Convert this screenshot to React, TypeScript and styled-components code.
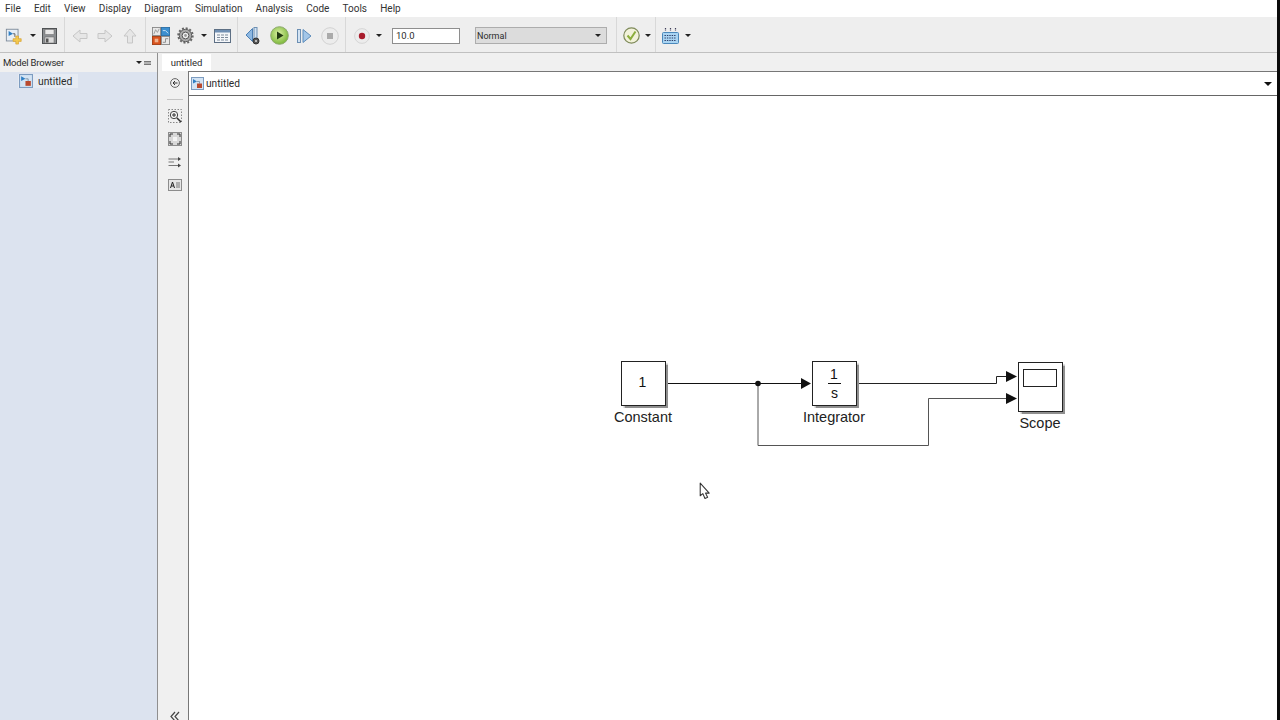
import React from 'react'
import styled, { createGlobalStyle } from 'styled-components'

const GlobalStyle = createGlobalStyle`
  html, body {
    margin: 0;
    padding: 0;
    background: #fff;
  }
  * {
    box-sizing: border-box;
  }
`

const Page = styled.div`
  width: 1280px;
  height: 720px;
  display: flex;
  flex-direction: column;
  overflow: hidden;
  background: #f0f0f0;
  border-right: 3px solid #0b0b0b;
  color: #2b2b2b;
  font-family: Roboto, 'Noto Sans', sans-serif;
`

const MenuBar = styled.div`
  height: 17px;
  flex: none;
  display: flex;
  align-items: center;
  padding-left: 5px;
  gap: 13.2px;
  background: #fff;
  font-size: 10px;
  color: #333;
`

const Toolbar = styled.div`
  height: 36px;
  flex: none;
  display: flex;
  align-items: center;
  background: #eeeeee;
  border-bottom: 1px solid #c0c0c0;
`

const ToolGroup = styled.div<{ $width: number; $pad?: number; $gap?: number }>`
  width: ${({ $width }) => $width}px;
  height: 100%;
  flex: none;
  display: flex;
  align-items: center;
  gap: ${({ $gap }) => $gap ?? 4}px;
  padding-left: ${({ $pad }) => $pad ?? 4}px;
  padding-top: 2px;
  border-right: 1px solid #d8d8d8;

  &:last-child {
    border-right: none;
  }
`

const Caret = styled.span`
  width: 0;
  height: 0;
  flex: none;
  border-left: 3px solid transparent;
  border-right: 3px solid transparent;
  border-top: 3px solid #222;
`

const AddressCaret = styled(Caret)`
  border-left-width: 4px;
  border-right-width: 4px;
  border-top-width: 4px;
  border-top-color: #111;
`

const TimeInput = styled.div`
  width: 68px;
  height: 16px;
  flex: none;
  margin-left: 4px;
  padding-left: 3px;
  background: #fff;
  border: 1px solid #8e8e8e;
  font-size: 9.5px;
  line-height: 14px;
`

const ModeSelect = styled.div`
  width: 132px;
  height: 17px;
  flex: none;
  margin-left: 9px;
  padding: 0 5px 0 1px;
  display: flex;
  align-items: center;
  justify-content: space-between;
  background: #dcdcdc;
  border: 1px solid #adadad;
  font-size: 9px;
`

const Main = styled.div`
  flex: 1;
  min-height: 0;
  display: flex;
`

const Sidebar = styled.div`
  width: 158px;
  flex: none;
  display: flex;
  flex-direction: column;
  border-right: 1px solid #8f8f8f;
`

const SidebarHead = styled.div`
  height: 19px;
  flex: none;
  display: flex;
  align-items: center;
  justify-content: space-between;
  padding: 0 6px 0 3px;
  font-size: 9.5px;
  letter-spacing: -0.2px;
`

const HeadTools = styled.div`
  display: flex;
  align-items: center;
  gap: 2px;
`

const TreeArea = styled.div`
  flex: 1;
  padding: 2px 0 0 18px;
  background: #dce3ef;
`

const TreeRow = styled.div`
  width: 60px;
  height: 14px;
  display: flex;
  align-items: center;
  gap: 5px;
  padding-left: 1px;
  background: #e6ebf3;
  font-size: 10.3px;
`

const Work = styled.div`
  flex: 1;
  min-width: 0;
  display: flex;
  flex-direction: column;
`

const TabRow = styled.div`
  height: 18px;
  flex: none;
  display: flex;
  padding: 1px 0 0 4px;
`

const Tab = styled.div`
  width: 49px;
  height: 17px;
  display: flex;
  align-items: center;
  justify-content: center;
  background: #fff;
  font-size: 9.5px;
`

const Body = styled.div`
  flex: 1;
  min-height: 0;
  display: flex;
`

const Strip = styled.div`
  width: 31px;
  flex: none;
  display: flex;
  flex-direction: column;
  align-items: center;
  padding: 7px 0 0 3px;
  border-right: 1px solid #777;
`

const StripRule = styled.div`
  width: 16px;
  height: 1px;
  margin: 11px 0 9px;
  background: #c4c4c4;
`

const StripButton = styled.div`
  width: 14px;
  height: 14px;
  margin-bottom: 9px;
  display: flex;
`

const StripEnd = styled.div`
  margin-top: auto;
  margin-bottom: -2px;
  height: 11px;
  display: flex;
`

const Editor = styled.div`
  flex: 1;
  min-width: 0;
  display: flex;
  flex-direction: column;
  background: #fff;
`

const AddressBar = styled.div`
  height: 25px;
  flex: none;
  display: flex;
  align-items: center;
  justify-content: space-between;
  padding: 0 5px 0 2px;
  border-top: 1px solid #777;
  border-bottom: 1px solid #666;
`

const Crumb = styled.div`
  display: flex;
  align-items: center;
  gap: 2px;
  font-size: 10.2px;
`

const Canvas = styled.div`
  flex: 1;
  position: relative;
`

const Wires = styled.svg`
  position: absolute;
  left: 0;
  top: 0;
  width: 1088px;
  height: 624px;
`

const Block = styled.div<{ $x: number; $y: number; $h: number }>`
  position: absolute;
  left: ${({ $x }) => $x}px;
  top: ${({ $y }) => $y}px;
  width: 45px;
  height: ${({ $h }) => $h}px;
  display: flex;
  flex-direction: column;
  align-items: center;
  justify-content: center;
  background: #fff;
  border: 1px solid #222;
  box-shadow: 1.5px 1.5px 1px #8f8f8f;
  font-family: 'Liberation Sans', Arial, sans-serif;
  font-size: 14px;
  color: #111;
`

const ConstantValue = styled.span`
  margin: 0 2px 4px 0;
`

const Fraction = styled.span`
  width: 13px;
  padding-right: 1px;
  line-height: 18px;
  text-align: center;
`

const FractionBottom = styled(Fraction)`
  padding-right: 0;
  border-top: 1px solid #111;
`

const ScopeScreen = styled.div`
  width: 34px;
  height: 18px;
  margin: 0 1px 18px 0;
  border: 1px solid #222;
`

const BlockLabel = styled.div<{ $cx: number; $y: number }>`
  position: absolute;
  left: ${({ $cx }) => $cx - 50}px;
  top: ${({ $y }) => $y}px;
  width: 100px;
  text-align: center;
  font-family: 'Liberation Sans', Arial, sans-serif;
  font-size: 14.5px;
  line-height: 17px;
  color: #222;
`

const Pointer = styled.svg`
  position: absolute;
  left: 510px;
  top: 386px;
  width: 13px;
  height: 18px;
`

function ModelIcon({ size = 13 }: { size?: number }) {
  return (
    <svg width={size} height={size} viewBox="0 0 13 13">
      <rect x="0.5" y="0.5" width="12" height="12" fill="#d4e4f4" stroke="#7d9cc0" />
      <path d="M2 2 L6 4.5 L2 6.5 Z" fill="#2f7fc4" />
      <path d="M6 4.5 H8.5 V6.5" fill="none" stroke="#6b7f92" strokeWidth="0.7" />
      <rect x="6" y="6.5" width="5" height="4.5" fill="#b94a2e" />
    </svg>
  )
}

function NewModelIcon() {
  return (
    <svg width="18" height="18" viewBox="0 0 20 20">
      <rect x="1.5" y="2.5" width="13" height="13" fill="#e8eef5" stroke="#7c8a99" />
      <path d="M4 4.5 L9 7.5 L4 10 Z" fill="#2f7fc4" />
      <path d="M9 7.5 H11 V11" fill="none" stroke="#555" />
      <path d="M12 10 H15 V13 H18 V16 H15 V19 H12 V16 H9 V13 H12 Z" fill="#f3c94e" stroke="#d69e2c" strokeWidth="0.7" />
    </svg>
  )
}

function SaveIcon() {
  return (
    <svg width="15" height="16" viewBox="0 0 15 16">
      <rect x="0.5" y="0.5" width="14" height="15" fill="#8c8f92" stroke="#4f5254" />
      <rect x="3" y="1.5" width="9" height="5" fill="#e8e8e8" stroke="#666" strokeWidth="0.5" />
      <rect x="3" y="9" width="9" height="6" fill="#dcdcdc" stroke="#666" strokeWidth="0.5" />
      <rect x="4" y="10.5" width="2.5" height="4" fill="#555" />
    </svg>
  )
}

function NavArrow({ rotate }: { rotate: number }) {
  return (
    <svg width="16" height="16" viewBox="0 0 16 16">
      <path
        d="M1 8 L8 2 V5.5 H15 V10.5 H8 V14 Z"
        fill="#e6e6e6"
        stroke="#c6c6c6"
        transform={`rotate(${rotate} 8 8)`}
      />
    </svg>
  )
}

function LibraryIcon() {
  return (
    <svg width="18" height="18" viewBox="0 0 20 20">
      <rect x="0.5" y="0.5" width="9" height="9" fill="#e8e8e8" stroke="#888" />
      <path d="M2 8 L4 3 L6 6 L8 2" fill="none" stroke="#999" />
      <rect x="10.5" y="0.5" width="9" height="9" fill="#3c8fd0" stroke="#2a6ea6" />
      <path d="M12 4 H15 L18 7" fill="none" stroke="#cfe5f5" />
      <rect x="0.5" y="10.5" width="9" height="9" fill="#d9531e" stroke="#a33d13" />
      <rect x="3" y="13" width="4" height="4" fill="#f0b28e" />
      <rect x="10.5" y="10.5" width="9" height="9" fill="#e8e8e8" stroke="#888" />
      <path d="M12 17 H15 V13 H18" fill="none" stroke="#888" />
    </svg>
  )
}

function GearIcon() {
  return (
    <svg width="17" height="17" viewBox="0 0 17 17">
      <circle cx="8.5" cy="8.5" r="6.2" fill="#a9a9a9" stroke="#5d5d5d" />
      <circle cx="8.5" cy="8.5" r="7.2" fill="none" stroke="#666" strokeWidth="2" strokeDasharray="2 1.77" />
      <circle cx="8.5" cy="8.5" r="3.4" fill="#eee" stroke="#555" />
      <circle cx="8.5" cy="8.5" r="1.4" fill="#999" />
    </svg>
  )
}

function ExplorerIcon() {
  return (
    <svg width="17" height="14" viewBox="0 0 17 14">
      <rect x="0.5" y="0.5" width="16" height="13" fill="#f5f7fa" stroke="#5d6f84" />
      <rect x="1" y="1" width="15" height="2.5" fill="#6f8fb3" />
      <path d="M3 6 H14 M3 8.5 H14 M3 11 H14" stroke="#7d8b9b" strokeDasharray="3 1" />
    </svg>
  )
}

function StepBackIcon() {
  return (
    <svg width="16" height="19" viewBox="0 0 16 19">
      <path d="M7.5 2.5 L1 9 L7.5 15.5 Z" fill="#8db8e2" stroke="#4d80b5" />
      <rect x="9" y="1.5" width="3" height="11" fill="#d3e3f3" stroke="#6c8fb3" />
      <circle cx="11" cy="15" r="3" fill="#555" stroke="#333" />
      <circle cx="11" cy="15" r="1" fill="#ddd" />
    </svg>
  )
}

function RunIcon() {
  return (
    <svg width="19" height="19" viewBox="0 0 19 19">
      <defs>
        <radialGradient id="run" cx="45%" cy="40%" r="60%">
          <stop offset="0%" stopColor="#dcf0a4" />
          <stop offset="100%" stopColor="#7cb83a" />
        </radialGradient>
      </defs>
      <circle cx="9.5" cy="9.5" r="8.8" fill="url(#run)" stroke="#8ca96c" />
      <path d="M7 5.5 L13.5 9.5 L7 13.5 Z" fill="#233a12" />
    </svg>
  )
}

function StepForwardIcon() {
  return (
    <svg width="15" height="16" viewBox="0 0 15 16">
      <rect x="0.5" y="1.5" width="3" height="13" fill="#d3e3f3" stroke="#6c8fb3" />
      <path d="M6 1.5 L14 8 L6 14.5 Z" fill="#a3c6e8" stroke="#5d8cbb" />
    </svg>
  )
}

function RoundButton({ fill, size, dot }: { fill: string; size: number; dot: 'stop' | 'rec' }) {
  return (
    <svg width={size} height={size} viewBox="0 0 18 18">
      <circle cx="9" cy="9" r="8.3" fill="#ececec" stroke="#d2d2d2" />
      {dot === 'stop' ? <rect x="6" y="6" width="6" height="6" fill={fill} /> : <circle cx="9" cy="9" r="3.6" fill={fill} />}
    </svg>
  )
}

function CheckIcon() {
  return (
    <svg width="17" height="17" viewBox="0 0 17 17">
      <circle cx="8.5" cy="8.5" r="7.7" fill="#f2f2da" stroke="#7e8a5a" strokeWidth="1.2" />
      <path d="M4.5 8.5 L7.5 12 L12.5 4.5" fill="none" stroke="#8cae3c" strokeWidth="2" />
    </svg>
  )
}

function GridIcon() {
  return (
    <svg width="17" height="17" viewBox="0 0 17 17">
      <path d="M3.5 1 V4 M8.5 1 V4 M13.5 1 V4" stroke="#3f3f5a" strokeWidth="1.2" strokeDasharray="1 0.6" />
      <rect x="0.5" y="5.5" width="16" height="11" rx="1" fill="#a9d4f2" stroke="#4a88bb" />
      <path d="M2.5 8.5 H14.5 M2.5 11 H14.5 M2.5 13.5 H14.5" stroke="#2e3d66" strokeWidth="1.2" strokeDasharray="1.4 1" />
    </svg>
  )
}

function BackDot() {
  return (
    <svg width="10" height="10" viewBox="0 0 10 10">
      <circle cx="5" cy="5" r="4.4" fill="#eee" stroke="#666" />
      <path d="M7.5 5 H3 M5 3 L3 5 L5 7" fill="none" stroke="#333" />
    </svg>
  )
}

function ZoomIcon() {
  return (
    <svg width="14" height="14" viewBox="0 0 14 14">
      <rect x="0.5" y="0.5" width="13" height="13" fill="none" stroke="#888" strokeDasharray="1.5 1.5" />
      <circle cx="6" cy="6" r="3.7" fill="#f4f4f4" stroke="#444" />
      <path d="M4 6 H8 M6 4 V8" stroke="#333" />
      <path d="M9 9 L13 13" stroke="#333" strokeWidth="1.6" />
    </svg>
  )
}

function FitIcon() {
  return (
    <svg width="14" height="14" viewBox="0 0 14 14">
      <rect x="0.5" y="0.5" width="13" height="13" fill="#d8d8d8" stroke="#8c8c8c" />
      <path d="M2 5 V2 H5 M9 2 H12 V5 M12 9 V12 H9 M5 12 H2 V9" fill="none" stroke="#333" />
      <rect x="5" y="5" width="4" height="4" fill="#f4f4f4" />
    </svg>
  )
}

function RouteIcon() {
  return (
    <svg width="14" height="14" viewBox="0 0 14 14">
      <path d="M0.5 4 H11 M0.5 7 H6 M0.5 10.5 H11" stroke="#777" />
      <path d="M10 2 L13 4 L10 6 Z M10 8.5 L13 10.5 L10 12.5 Z" fill="#444" />
    </svg>
  )
}

function AnnotationIcon() {
  return (
    <svg width="14" height="14" viewBox="0 0 14 14">
      <rect x="0.5" y="1.5" width="13" height="11" fill="#e6e6e6" stroke="#8c8c8c" />
      <path d="M2.5 10 L4.5 4 L6.5 10 M3.3 8 H5.7" fill="none" stroke="#222" />
      <path d="M8 5 H12 M8 7 H12 M8 9 H12" stroke="#777" />
    </svg>
  )
}

function Collapse() {
  return (
    <svg width="10" height="11" viewBox="0 0 10 11">
      <path d="M5 1 L1 5.5 L5 10 M9 1 L5 5.5 L9 10" fill="none" stroke="#444" strokeWidth="1.2" />
    </svg>
  )
}

function ListMenu() {
  return (
    <svg width="7" height="6" viewBox="0 0 7 6">
      <path d="M0 1.5 H7 M0 3 H7 M0 4.5 H7" stroke="#777" />
    </svg>
  )
}

const MENUS = ['File', 'Edit', 'View', 'Display', 'Diagram', 'Simulation', 'Analysis', 'Code', 'Tools', 'Help']

export default function App() {
  return (
    <Page>
      <GlobalStyle />
      <MenuBar>
        {MENUS.map(item => (
          <span key={item}>{item}</span>
        ))}
      </MenuBar>
      <Toolbar>
        <ToolGroup $width={65} $pad={5} $gap={6.5}>
          <NewModelIcon />
          <Caret />
          <SaveIcon />
        </ToolGroup>
        <ToolGroup $width={81} $pad={7} $gap={9}>
          <NavArrow rotate={0} />
          <NavArrow rotate={180} />
          <NavArrow rotate={90} />
        </ToolGroup>
        <ToolGroup $width={92} $pad={6} $gap={7}>
          <LibraryIcon />
          <GearIcon />
          <Caret />
          <ExplorerIcon />
        </ToolGroup>
        <ToolGroup $width={108} $pad={7} $gap={8.5}>
          <StepBackIcon />
          <RunIcon />
          <StepForwardIcon />
          <RoundButton fill="#aaa" size={18} dot="stop" />
        </ToolGroup>
        <ToolGroup $width={271} $pad={8} $gap={6}>
          <RoundButton fill="#a81c2c" size={16} dot="rec" />
          <Caret />
          <TimeInput>10.0</TimeInput>
          <ModeSelect>
            Normal
            <Caret />
          </ModeSelect>
        </ToolGroup>
        <ToolGroup $width={39} $pad={6} $gap={5}>
          <CheckIcon />
          <Caret />
        </ToolGroup>
        <ToolGroup $width={50} $pad={6} $gap={6}>
          <GridIcon />
          <Caret />
        </ToolGroup>
      </Toolbar>
      <Main>
        <Sidebar>
          <SidebarHead>
            Model Browser
            <HeadTools>
              <Caret />
              <ListMenu />
            </HeadTools>
          </SidebarHead>
          <TreeArea>
            <TreeRow>
              <ModelIcon size={14} />
              untitled
            </TreeRow>
          </TreeArea>
        </Sidebar>
        <Work>
          <TabRow>
            <Tab>untitled</Tab>
          </TabRow>
          <Body>
            <Strip>
              <BackDot />
              <StripRule />
              <StripButton>
                <ZoomIcon />
              </StripButton>
              <StripButton>
                <FitIcon />
              </StripButton>
              <StripButton>
                <RouteIcon />
              </StripButton>
              <StripButton>
                <AnnotationIcon />
              </StripButton>
              <StripEnd>
                <Collapse />
              </StripEnd>
            </Strip>
            <Editor>
              <AddressBar>
                <Crumb>
                  <ModelIcon />
                  untitled
                </Crumb>
                <AddressCaret />
              </AddressBar>
              <Canvas>
                <Wires viewBox="0 0 1088 624">
                  <path d="M477 287.5 H612" stroke="#111" fill="none" />
                  <path d="M612 282 L622 287.5 L612 293 Z" fill="#111" />
                  <path d="M569 287.5 V349.5 H739.5 V302.5 H817" stroke="#555" fill="none" />
                  <circle cx="569" cy="287.5" r="2.8" fill="#111" />
                  <path d="M668 287.5 H807.5 V280.5 H817" stroke="#222" fill="none" />
                  <path d="M817 275 L828 280.5 L817 286 Z" fill="#111" />
                  <path d="M817 297 L828 302.5 L817 308 Z" fill="#111" />
                </Wires>
                <Block $x={432} $y={265} $h={45}>
                  <ConstantValue>1</ConstantValue>
                </Block>
                <BlockLabel $cx={454} $y={313}>
                  Constant
                </BlockLabel>
                <Block $x={623} $y={265} $h={45}>
                  <Fraction>1</Fraction>
                  <FractionBottom>s</FractionBottom>
                </Block>
                <BlockLabel $cx={645} $y={313}>
                  Integrator
                </BlockLabel>
                <Block $x={829} $y={266} $h={50}>
                  <ScopeScreen />
                </Block>
                <BlockLabel $cx={851} $y={319}>
                  Scope
                </BlockLabel>
                <Pointer viewBox="0 0 12 17">
                  <path
                    d="M1 1 V13 L3.5 11 L5.5 15.5 L8 14.5 L6 10.5 H9.5 Z"
                    fill="#fff"
                    stroke="#333"
                    strokeLinejoin="round"
                  />
                </Pointer>
              </Canvas>
            </Editor>
          </Body>
        </Work>
      </Main>
    </Page>
  )
}
